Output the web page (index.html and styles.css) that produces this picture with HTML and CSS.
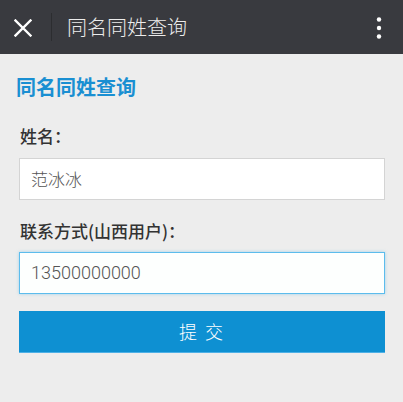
FILE: index.html
```html
<!DOCTYPE html>
<html lang="zh-CN">
<head>
<meta charset="utf-8">
<title>同名同姓查询</title>
<link rel="stylesheet" href="styles.css">
</head>
<body>
<header class="topbar">
  <span class="close-btn">
    <svg width="18" height="18" viewBox="0 0 18 18"><path d="M1.5 1.5 L16.5 16.5 M16.5 1.5 L1.5 16.5" stroke="#ffffff" stroke-width="2.4" stroke-linecap="square" fill="none"/></svg>
  </span>
  <span class="divider"></span>
  <span class="topbar-title">同名同姓查询</span>
  <span class="more-btn">
    <svg width="6" height="22" viewBox="0 0 6 22"><circle cx="3" cy="2.5" r="2.2" fill="#fff"/><circle cx="3" cy="11" r="2.2" fill="#fff"/><circle cx="3" cy="19.5" r="2.2" fill="#fff"/></svg>
  </span>
</header>
<main class="page">
  <h1 class="page-title">同名同姓查询</h1>
  <form class="form">
    <label class="field-label">姓名：</label>
    <div class="input">范冰冰</div>
    <label class="field-label label-2">联系方式(山西用户)：</label>
    <div class="input input-focus">13500000000</div>
    <div class="submit">提 交</div>
  </form>
</main>
</body>
</html>
```
FILE: styles.css
```css
html, body {
  margin: 0;
  padding: 0;
  background: #ededed;
  font-family: "Noto Sans CJK SC", "Noto Sans", sans-serif;
}
.topbar {
  height: 54px;
  background: #393a3f;
  display: flex;
  align-items: center;
  box-sizing: border-box;
}
.close-btn {
  width: 51px;
  display: flex;
  justify-content: flex-start;
  padding-left: 14px;
  box-sizing: border-box;
  margin-top: 1px;
}
.divider {
  width: 1px;
  height: 28px;
  background: #2c2d30;
}
.topbar-title {
  margin-left: 15px;
  color: #ececec;
  font-size: 20px;
  font-weight: 300;
  flex: 1;
  line-height: 28px;
}
.more-btn {
  width: 26px;
  display: flex;
  margin-right: 1px;
  margin-top: 1px;
}
.page {
  padding: 19px 18px 0 19px;
}
.page-title {
  margin: 0 0 0 -3px;
  font-size: 20px;
  line-height: 28px;
  font-weight: 700;
  color: #1a8fd2;
}
.form {
  display: flex;
  flex-direction: column;
  margin-top: 23px;
}
.field-label {
  font-size: 17px;
  line-height: 24px;
  font-weight: 500;
  color: #333;
  padding-left: 1px;
}
.label-2 {
  margin-top: 19px;
}
.input {
  margin-top: 10px;
  height: 42px;
  box-sizing: border-box;
  border: 1px solid #d4d4d4;
  background: #fff;
  padding-left: 11px;
  font-size: 17px;
  font-weight: 300;
  line-height: 40px;
  color: #555;
}
.input-focus {
  margin-top: 9px;
  border: 1px solid #5cbcec;
  box-shadow: 0 0 3px rgba(92, 188, 236, 0.5);
  background: #fdfffe;
  font-family: Roboto, "Noto Sans", sans-serif;
  font-weight: 300;
  font-size: 18px;
  color: #555;
}
.submit {
  margin-top: 17px;
  height: 42px;
  background: #0e90d2;
  border-bottom: 1px solid #4eb0e6;
  box-sizing: border-box;
  color: #fff;
  font-size: 18px;
  font-weight: 300;
  line-height: 41px;
  text-align: center;
  letter-spacing: 2px;
}
```
